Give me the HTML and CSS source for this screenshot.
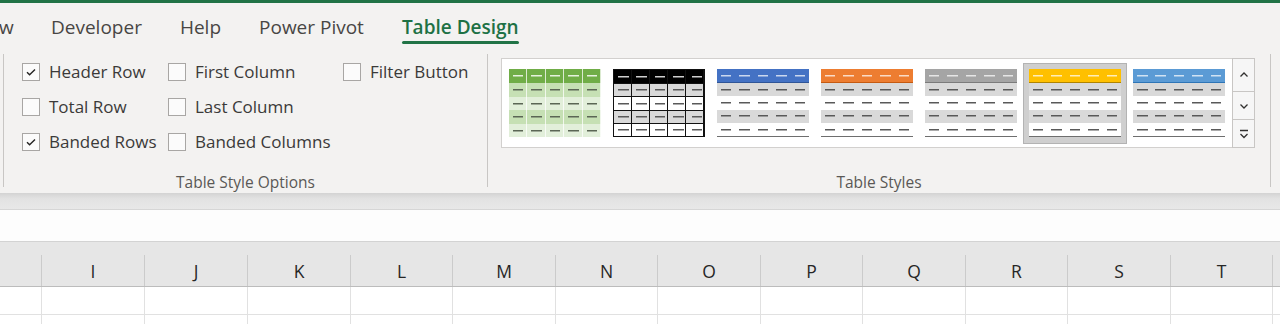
FILE: index.html
```html
<!DOCTYPE html>
<html lang="en">
<head>
<meta charset="utf-8">
<title>Table Design</title>
<link rel="stylesheet" href="styles.css">
</head>
<body>
<div class="topbar"></div>
<nav class="tabs">
  <span class="tab tab-partial">w</span>
  <span class="tab">Developer</span>
  <span class="tab">Help</span>
  <span class="tab">Power Pivot</span>
  <span class="tab active">Table Design</span>
</nav>
<section class="ribbon">
  <div class="group group-prev"></div>
  <div class="group group-options">
    <div class="options">
      <div class="opt"><span class="cb"><svg viewBox="0 0 16 16"><path d="M4 8.2l2.6 2.6L12 5.4"/></svg></span>Header Row</div>
      <div class="opt"><span class="cb"></span>First Column</div>
      <div class="opt"><span class="cb"></span>Filter Button</div>
      <div class="opt"><span class="cb"></span>Total Row</div>
      <div class="opt"><span class="cb"></span>Last Column</div>
      <div class="opt"></div>
      <div class="opt"><span class="cb"><svg viewBox="0 0 16 16"><path d="M4 8.2l2.6 2.6L12 5.4"/></svg></span>Banded Rows</div>
      <div class="opt"><span class="cb"></span>Banded Columns</div>
    </div>
    <div class="group-label">Table Style Options</div>
  </div>
  <div class="group group-styles">
    <div class="gallery">
      <div class="gallery-items">
        <div class="slot"><div class="thumb t-green"><span class="r h"></span><span class="r b"></span><span class="r"></span><span class="r b"></span><span class="r"></span></div></div>
        <div class="slot"><div class="thumb t-black"><span class="r h"></span><span class="r b"></span><span class="r"></span><span class="r b"></span><span class="r"></span></div></div>
        <div class="slot"><div class="thumb t-light t-blue"><span class="r h"></span><span class="r b"></span><span class="r"></span><span class="r b"></span><span class="r"></span></div></div>
        <div class="slot"><div class="thumb t-light t-orange"><span class="r h"></span><span class="r b"></span><span class="r"></span><span class="r b"></span><span class="r"></span></div></div>
        <div class="slot"><div class="thumb t-light t-gray"><span class="r h"></span><span class="r b"></span><span class="r"></span><span class="r b"></span><span class="r"></span></div></div>
        <div class="slot selected"><div class="thumb t-light t-gold"><span class="r h"></span><span class="r b"></span><span class="r"></span><span class="r b"></span><span class="r"></span></div></div>
        <div class="slot"><div class="thumb t-light t-sky"><span class="r h"></span><span class="r b"></span><span class="r"></span><span class="r b"></span><span class="r"></span></div></div>
      </div>
      <div class="gallery-scroll">
        <span class="sbtn s-up"><svg viewBox="0 0 12 12"><path d="M2.5 7.5L6 4l3.5 3.5"/></svg></span>
        <span class="sbtn s-down"><svg viewBox="0 0 12 12"><path d="M2.5 4.5L6 8l3.5-3.5"/></svg></span>
        <span class="sbtn s-more"><svg viewBox="0 0 12 12"><path d="M2 2.5h8M2.5 6L6 9.5 9.5 6"/></svg></span>
      </div>
    </div>
    <div class="group-label">Table Styles</div>
  </div>
</section>
<div class="ribbon-shadow"></div>
<div class="formula-bar"></div>
<div class="sheet">
  <div class="grid col-heads">
    <span class="ch"></span><span class="ch">I</span><span class="ch">J</span><span class="ch">K</span><span class="ch">L</span><span class="ch">M</span><span class="ch">N</span><span class="ch">O</span><span class="ch">P</span><span class="ch">Q</span><span class="ch">R</span><span class="ch">S</span><span class="ch">T</span><span class="ch"></span>
  </div>
  <div class="grid cells">
    <span></span><span></span><span></span><span></span><span></span><span></span><span></span><span></span><span></span><span></span><span></span><span></span><span></span><span></span>
  </div>
  <div class="grid cells last">
    <span></span><span></span><span></span><span></span><span></span><span></span><span></span><span></span><span></span><span></span><span></span><span></span><span></span><span></span>
  </div>
</div>
</body>
</html>
```
FILE: styles.css
```css
* { box-sizing: border-box; }
html, body { margin: 0; }
body {
  width: 1280px;
  height: 324px;
  overflow: hidden;
  background: #f3f2f1;
  font-family: "Open Sans", "Noto Sans", "Liberation Sans", sans-serif;
  color: #444;
}

.topbar { height: 3px; background: #217346; }

.tabs {
  display: flex;
  align-items: flex-start;
  gap: 38px;
  height: 45px;
  padding-top: 12px;
  font-size: 19px;
  line-height: 24px;
  color: #484644;
  white-space: nowrap;
}
.tab { display: flex; flex-direction: column; }
.tab-partial { width: 14px; margin-left: -1px; }
.tab.active { color: #1e7145; font-weight: 600; }
.tab.active::after {
  content: "";
  height: 3px;
  margin-top: 2px;
  border-radius: 2px;
  background: #217346;
}

.ribbon {
  display: flex;
  height: 145px;
  padding-top: 6px;
}
.group {
  display: flex;
  flex-direction: column;
  height: 133px;
  border-right: 1px solid #c8c6c4;
}
.group-prev { width: 4px; }
.group-options { width: 484px; padding-left: 18px; }
.group-styles { width: 783px; padding-left: 13px; padding-top: 4px; }
.group-label {
  margin-top: auto;
  margin-bottom: -5px;
  text-align: center;
  font-size: 15.5px;
  line-height: 20px;
  color: #5a5856;
}
.group-options .group-label { margin-left: -18px; }
.group-styles .group-label { margin-left: -13px; }

.options {
  display: grid;
  grid-template-columns: 134px 163px auto;
  grid-auto-rows: 35px;
  column-gap: 12px;
  font-size: 17px;
  color: #3b3a39;
  white-space: nowrap;
}
.opt { display: flex; align-items: center; gap: 9px; }
.cb {
  flex: none;
  width: 18px;
  height: 18px;
  border: 1px solid #a8a6a4;
  background: #fbfbfb;
  display: flex;
  align-items: center;
  justify-content: center;
}
.cb svg { width: 16px; height: 16px; fill: none; stroke: #252423; stroke-width: 1.4; }

.gallery { display: flex; height: 90px; }
.gallery-items {
  display: flex;
  width: 731px;
  height: 90px;
  padding: 4px 1px 0 1px;
  background: #fff;
  border: 1px solid #d2d0ce;
  border-right: none;
}
.slot {
  width: 104px;
  height: 81px;
  padding: 5px;
  border: 1px solid transparent;
}
.slot.selected { background: #cfcfcf; border-color: #b3b3b3; }

.thumb {
  width: 92px;
  height: 68px;
  display: flex;
  flex-direction: column;
  --bg: #fff;
  --dc: #595959;
}
.r {
  display: block;
  flex: 1;
  --rowbg: var(--bg);
  background-image: var(--lines, linear-gradient(transparent, transparent)),
    repeating-linear-gradient(90deg, transparent 0 4px, var(--rdc, var(--dc)) 4px 14.5px, transparent 14.5px 18.4px);
  background-size: 100% 100%, 100% 1.5px;
  background-position: 0 0, 0 50%;
  background-repeat: no-repeat;
  background-color: var(--rowbg);
}
.r.h { flex: 0 0 14px; }
.r.b { --rowbg: #d9d9d9; }

.t-green .r { --rowbg: #e2efda; --rdc: #5b6655; }
.t-green .r.b { --rowbg: #c6e0b4; }
.t-green .r.h { --rowbg: #70ad47; --rdc: #e6f1de; }
.t-green { --lines: repeating-linear-gradient(90deg, transparent 0 17.4px, rgba(255,255,255,.75) 17.4px 18.4px); }

.t-black { border: 1px solid #111; --lines: repeating-linear-gradient(90deg, transparent 0 17px, #111 17px 18px); }
.t-black .r { border-top: 1px solid #111; }
.t-black .r.h { border-top: none; flex-basis: 13px; --rowbg: #000; --rdc: #cfcfcf; }

.t-light { border-bottom: 1px solid #6e6e6e; }
.t-light .r.h { --rowbg: var(--hc); --rdc: rgba(255,255,255,.72); border-bottom: 1px solid var(--hd); }
.t-blue { --hc: #4472c4; --hd: #2f5597; }
.t-orange { --hc: #ed7d31; --hd: #c55a11; }
.t-gray { --hc: #a5a5a5; --hd: #7b7b7b; }
.t-gold { --hc: #ffc000; --hd: #b08400; }
.t-sky { --hc: #5b9bd5; --hd: #2e75b6; }

.gallery-scroll {
  display: flex;
  flex-direction: column;
  width: 23px;
  height: 90px;
  border: 1px solid #c8c6c4;
  background: #f6f6f6;
}
.sbtn {
  display: flex;
  align-items: center;
  justify-content: center;
}
.sbtn + .sbtn { border-top: 1px solid #c8c6c4; }
.s-up { height: 32px; }
.s-down { height: 28px; }
.s-more { flex: 1; }
.sbtn svg { width: 12px; height: 12px; fill: none; stroke: #323130; stroke-width: 1.3; }

.ribbon-shadow {
  height: 16px;
  background: linear-gradient(#d3d3d3, #e2e2e2 35%, #e8e8e8);
}
.formula-bar {
  height: 33px;
  background: #fdfdfd;
  border-top: 1px solid #d6d6d6;
  border-bottom: 1px solid #d3d3d3;
}

.grid {
  display: grid;
  grid-template-columns: 42px 103px 103px 103px repeat(4, 102px 103px) 102px 1fr;
}
.col-heads {
  height: 45px;
  background: #e6e6e6;
  border-bottom: 1px solid #bcbcbc;
  align-items: end;
}
.ch {
  height: 31px;
  padding-top: 2px;
  border-right: 1px solid #cbcbcb;
  text-align: center;
  font-size: 17.5px;
  line-height: 29px;
  color: #262626;
}
.ch:last-child { border-right: none; }
.cells {
  height: 28px;
  background: #fff;
  border-bottom: 1px solid #e1e1e1;
}
.cells.last { height: 10px; border-bottom: none; }
.cells span { border-right: 1px solid #e1e1e1; }
.cells span:last-child { border-right: none; }
```
